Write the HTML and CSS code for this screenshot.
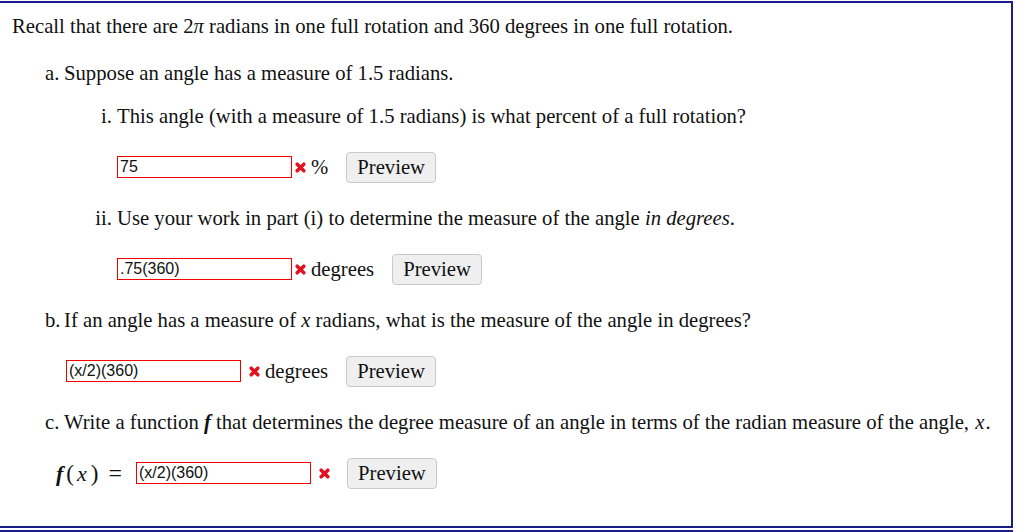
FILE: index.html
```html
<!DOCTYPE html>
<html lang="en">
<head>
    <meta charset="UTF-8">
    <title>Radians and Degrees</title>
    <link rel="stylesheet" href="styles.css">
</head>
<body>
    <div class="problem">
        <div class="row intro">Recall that there are 2<i class="m">π</i> radians in one full rotation and 360 degrees in one full rotation.</div>

        <div class="row part"><span class="mark">a.</span>Suppose an angle has a measure of 1.5 radians.</div>

        <div class="row sub"><span class="mark">i.</span>This angle (with a measure of 1.5 radians) is what percent of a full rotation?</div>
        <div class="answer sub-answer">
            <input class="ans" type="text" value="75">
            <span class="wrong tight"><svg viewBox="0 0 10 10"><path d="M2 2L8 8M8 2L2 8"/></svg></span>
            <span class="unit">%</span>
            <button class="preview">Preview</button>
        </div>

        <div class="row sub"><span class="mark">ii.</span>Use your work in part (i) to determine the measure of the angle <i>in degrees</i>.</div>
        <div class="answer sub-answer">
            <input class="ans" type="text" value=".75(360)">
            <span class="wrong tight"><svg viewBox="0 0 10 10"><path d="M2 2L8 8M8 2L2 8"/></svg></span>
            <span class="unit">degrees</span>
            <button class="preview">Preview</button>
        </div>

        <div class="row part"><span class="mark">b.</span>If an angle has a measure of <i class="m">x</i> radians, what is the measure of the angle in degrees?</div>
        <div class="answer part-answer">
            <input class="ans" type="text" value="(x/2)(360)">
            <span class="wrong"><svg viewBox="0 0 10 10"><path d="M2 2L8 8M8 2L2 8"/></svg></span>
            <span class="unit">degrees</span>
            <button class="preview">Preview</button>
        </div>

        <div class="row part"><span class="mark">c.</span>Write a function <i class="fn">f</i> that determines the degree measure of an angle in terms of the radian measure of the angle, <i class="m mx">x</i>.</div>
        <div class="answer func-answer">
            <span class="formula"><i class="fn">f</i><span class="par">(</span><i class="m">x</i><span class="par">)</span><span class="eq">=</span></span>
            <input class="ans" type="text" value="(x/2)(360)">
            <span class="wrong"><svg viewBox="0 0 10 10"><path d="M2 2L8 8M8 2L2 8"/></svg></span>
            <button class="preview">Preview</button>
        </div>
    </div>
    <div class="problem next"></div>
</body>
</html>
```
FILE: styles.css
```css
html, body {
    margin: 0;
    padding: 0;
    background: #ffffff;
    font-family: 'Liberation Serif', 'Times New Roman', serif;
    font-size: 20.7px;
    color: #111;
    overflow: hidden;
}

.problem {
    margin: 1px 11px 0 0;
    border: 2px solid #1b1b8a;
    border-left: none;
    padding: 0 0 37px 12px;
}

.problem.next {
    margin-top: 2px;
    height: 20px;
    padding: 0;
}

/* text lines */
.row {
    height: 32px;
    line-height: 32px;
    white-space: nowrap;
    margin-top: 19px;
}

.intro {
    margin-top: 7px;
}

.part {
    padding-left: 33px;
}

.intro + .part {
    margin-top: 15px;
}

.part + .sub {
    margin-top: 11px;
}

.part .mark {
    display: inline-block;
    width: 19px;
}

.sub {
    padding-left: 105px;
}

.sub .mark {
    display: inline-block;
    width: 30px;
    margin-left: -30px;
    padding-right: 5px;
    box-sizing: border-box;
    text-align: right;
}

.m {
    font-style: italic;
}

.mx {
    margin-left: 1px;
    margin-right: 1px;
}

.fn {
    font-weight: bold;
    font-style: italic;
}

/* answer lines */
.answer {
    height: 32px;
    display: flex;
    align-items: center;
    white-space: nowrap;
    margin-top: 19px;
}

.sub-answer {
    padding-left: 105px;
}

.part-answer {
    padding-left: 54px;
}

.func-answer {
    padding-left: 44px;
}

.formula {
    display: inline-flex;
    align-items: baseline;
    font-size: 22px;
    margin-right: 14px;
}

.formula .fn {
    margin-right: 3px;
}

.formula .m {
    margin: 0 4px 0 3px;
}

.formula .par {
    font-size: 23px;
}

.formula .eq {
    margin-left: 10px;
    font-size: 24px;
}

.ans {
    box-sizing: border-box;
    width: 175px;
    height: 22px;
    margin: 0;
    padding: 0 2px;
    border: 1px solid #f20000;
    border-radius: 0;
    outline: none;
    font-family: 'Liberation Sans', Arial, sans-serif;
    font-size: 16px;
    color: #111;
}

.wrong {
    display: inline-flex;
    margin-left: 8px;
    margin-right: 5px;
}

.wrong.tight {
    margin-left: 3px;
}

.wrong svg {
    width: 11px;
    height: 11px;
    stroke: #e3121e;
    stroke-width: 3.2;
    stroke-linecap: round;
}

.unit {
    margin-right: 18px;
}

.preview {
    box-sizing: border-box;
    height: 31px;
    padding: 0 10px;
    background: #efefef;
    border: 1px solid #c9c9c9;
    border-radius: 4px;
    font-family: 'Liberation Serif', 'Times New Roman', serif;
    font-size: 20.7px;
    color: #111;
}

.func-answer .preview {
    margin-left: 12px;
}
```
